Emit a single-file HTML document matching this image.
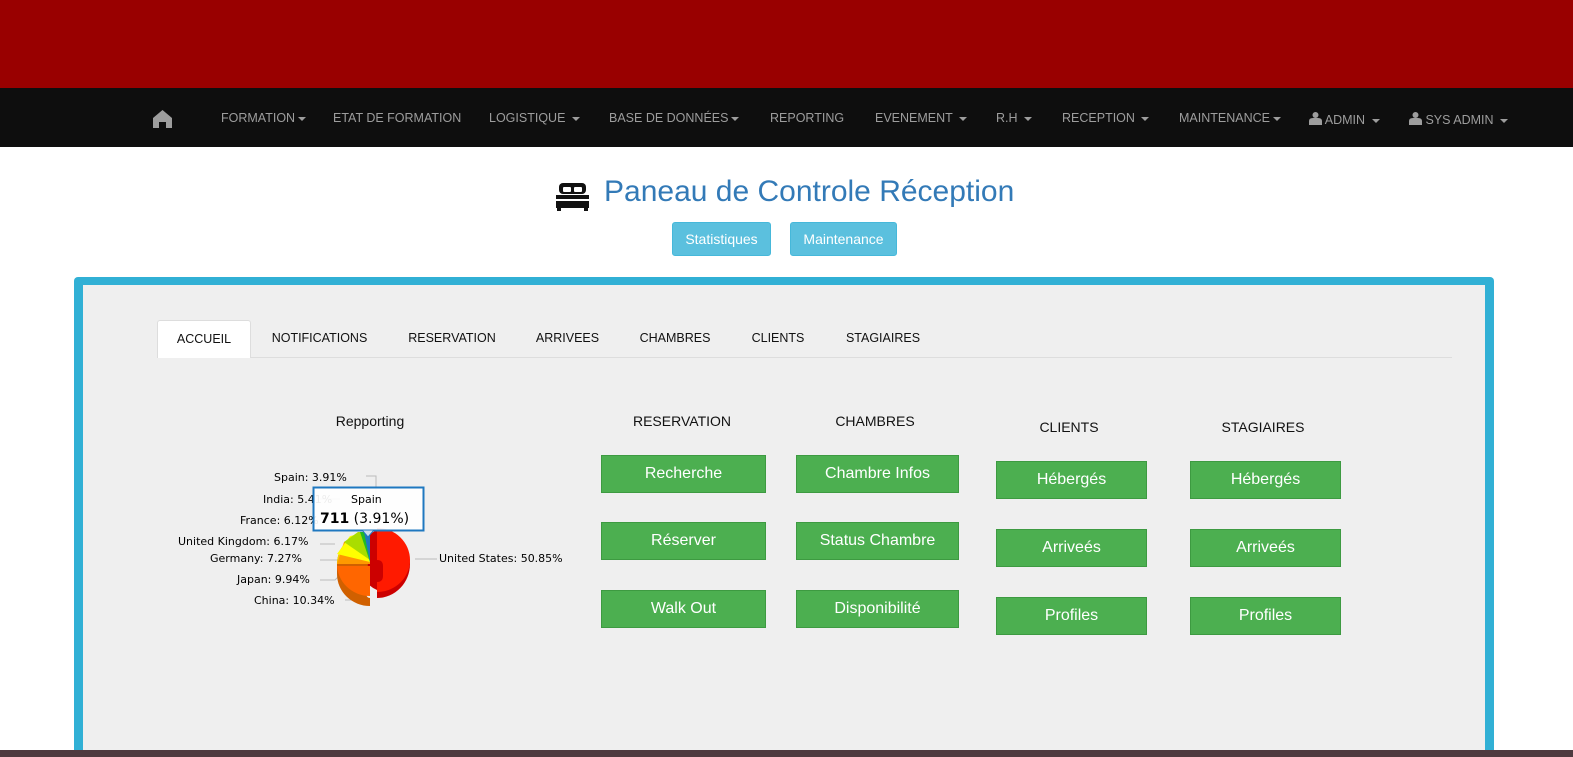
<!DOCTYPE html>
<html><head><meta charset="utf-8"><style>
*{margin:0;padding:0;box-sizing:border-box}
html,body{width:1573px;height:757px;overflow:hidden}
body{background:#fff;font-family:"Liberation Sans",sans-serif;position:relative}
.a{position:absolute}
.top{left:0;top:0;width:1573px;height:88px;background:#990000}
.nav{left:0;top:88px;width:1573px;height:59px;background:#0e0e0e}
.nav span{position:absolute;top:23px;color:#9d9d9d;font-size:12.5px;white-space:nowrap}
.car{display:inline-block;width:0;height:0;border-left:4px solid transparent;border-right:4px solid transparent;border-top:4px solid #9d9d9d;vertical-align:middle;margin-left:3px}
.title{left:604px;top:175px;font-size:30px;color:#337ab7}
.ib{top:222px;height:34px;background:#5bc0de;border:1px solid #46b8da;border-radius:3px;color:#fff;font-size:14px;text-align:center;line-height:32px}
.panel{left:74px;top:277px;width:1420px;height:473px;background:#31b0d5;border-radius:4px 4px 0 0}
.inner{left:83px;top:285px;width:1402px;height:465px;background:#efefef}
.tabs{left:157px;top:357px;width:1295px;height:1px;background:#ddd}
.tab{top:320px;height:38px;line-height:36px;font-size:12.5px;color:#111;text-align:center}
.act{background:#fff;border:1px solid #ddd;border-bottom:none;border-radius:3px 3px 0 0}
.h{font-size:14px;color:#111;text-align:center;width:200px}
.g{background:#4caf50;color:#fff;font-size:16px;text-align:center;border:1px solid #3d9a41}
.tb{left:0;top:750px;width:1573px;height:7px;background:#4e3a3f}
.lab{font-family:"DejaVu Sans",sans-serif;font-size:11px;color:#222}
</style></head><body>
<div class="a top"></div>
<div class="a nav">
<svg class="a" style="left:153px;top:22px" width="19" height="18" viewBox="0 0 19 18"><path d="M9.5 0L0 8v10h6v-6h7v6h6V8z" fill="#9d9d9d"/></svg>
<span style="left:221px">FORMATION<i class="car"></i></span>
<span style="left:333px">ETAT DE FORMATION</span>
<span style="left:489px">LOGISTIQUE <i class="car"></i></span>
<span style="left:609px">BASE DE DONNÉES<i class="car"></i></span>
<span style="left:770px">REPORTING</span>
<span style="left:875px">EVENEMENT <i class="car"></i></span>
<span style="left:996px">R.H <i class="car"></i></span>
<span style="left:1062px">RECEPTION <i class="car"></i></span>
<span style="left:1179px">MAINTENANCE<i class="car"></i></span>
<span style="left:1309px;top:24px"><svg width="13" height="13" viewBox="0 0 13 13" style="vertical-align:-1px"><circle cx="6.5" cy="3" r="3" fill="#9d9d9d"/><path d="M0 13V9q0-3 4-3h5q4 0 4 3v4z" fill="#9d9d9d"/></svg> ADMIN <i class="car"></i></span>
<span style="left:1409px;top:24px"><svg width="13" height="13" viewBox="0 0 13 13" style="vertical-align:-1px"><circle cx="6.5" cy="3" r="3" fill="#9d9d9d"/><path d="M0 13V9q0-3 4-3h5q4 0 4 3v4z" fill="#9d9d9d"/></svg> SYS ADMIN <i class="car"></i></span>
</div>
<svg class="a" style="left:556px;top:183px" width="33" height="28" viewBox="0 0 33 28"><rect x="3" y="0" width="27" height="11" rx="4" fill="#111"/><rect x="7" y="4" width="8" height="5" rx="1" fill="#fff"/><rect x="18" y="4" width="8" height="5" rx="1" fill="#fff"/><rect x="0" y="12" width="33" height="4" fill="#111"/><rect x="0" y="18" width="33" height="7" fill="#111"/><rect x="1" y="25" width="4" height="3" fill="#111"/><rect x="28" y="25" width="4" height="3" fill="#111"/></svg>
<div class="a title">Paneau de Controle Réception</div>
<div class="a ib" style="left:672px;width:99px">Statistiques</div>
<div class="a ib" style="left:790px;width:107px">Maintenance</div>
<div class="a panel"></div>
<div class="a inner"></div>
<div class="a tabs"></div>
<div class="a tab act" style="left:157px;width:94px">ACCUEIL</div>
<div class="a tab" style="left:262px;width:115px">NOTIFICATIONS</div>
<div class="a tab" style="left:398px;width:108px">RESERVATION</div>
<div class="a tab" style="left:527px;width:81px">ARRIVEES</div>
<div class="a tab" style="left:630px;width:90px">CHAMBRES</div>
<div class="a tab" style="left:742px;width:72px">CLIENTS</div>
<div class="a tab" style="left:836px;width:94px">STAGIAIRES</div>
<div class="a h" style="left:270px;top:413px">Repporting</div>
<div class="a h" style="left:582px;top:413px">RESERVATION</div>
<div class="a h" style="left:775px;top:413px">CHAMBRES</div>
<div class="a h" style="left:969px;top:419px">CLIENTS</div>
<div class="a h" style="left:1163px;top:419px">STAGIAIRES</div>
<div class="a g" style="left:601px;top:455px;width:165px;height:38px;line-height:36px">Recherche</div>
<div class="a g" style="left:601px;top:522px;width:165px;height:38px;line-height:36px">Réserver</div>
<div class="a g" style="left:601px;top:590px;width:165px;height:38px;line-height:36px">Walk Out</div>
<div class="a g" style="left:796px;top:455px;width:163px;height:38px;line-height:36px">Chambre Infos</div>
<div class="a g" style="left:796px;top:522px;width:163px;height:38px;line-height:36px">Status Chambre</div>
<div class="a g" style="left:796px;top:590px;width:163px;height:38px;line-height:36px">Disponibilité</div>
<div class="a g" style="left:996px;top:461px;width:151px;height:38px;line-height:36px">Hébergés</div>
<div class="a g" style="left:996px;top:529px;width:151px;height:38px;line-height:36px">Arriveés</div>
<div class="a g" style="left:996px;top:597px;width:151px;height:38px;line-height:36px">Profiles</div>
<div class="a g" style="left:1190px;top:461px;width:151px;height:38px;line-height:36px">Hébergés</div>
<div class="a g" style="left:1190px;top:529px;width:151px;height:38px;line-height:36px">Arriveés</div>
<div class="a g" style="left:1190px;top:597px;width:151px;height:38px;line-height:36px">Profiles</div>
<svg class="a" style="left:170px;top:460px" width="410" height="150">
<g stroke="#bbb" fill="none"><path d="M196 16h10v40"/><path d="M150 39h20"/><path d="M150 84h15"/><path d="M150 100h20"/><path d="M150 120h15l10-10"/><path d="M175 140h15v-20"/><path d="M245 99h22"/></g>
<path d="M207 70a33 34 0 0 1 0 68v-8a33 33 0 0 1 0-60z" fill="#cc0000"/>
<path d="M207 68a33 32 0 0 1 0 64v-10q6 0 6-6v-10q0-6-6-6z" fill="#ff1a00"/>
<path d="M200 72a33 32 0 0 0-33 32v10a33 32 0 0 0 33 32v-8q-4 0-4-6z" fill="#d06000"/>
<path d="M200 72a33 32 0 0 0-33 32h33z" fill="#f5d000"/>
<path d="M200 72l-26 10-7 22h33z" fill="#ff9900"/>
<path d="M200 72l-20 4-13 18 33 8z" fill="#ffff00"/>
<path d="M200 72l-12 0-14 10 26 18z" fill="#aadd00"/>
<path d="M200 72l-10 0 10 30z" fill="#22bb22"/>
<path d="M200 72l-6 0 6 30z" fill="#1f78c0"/>
<path d="M167 104a33 32 0 0 0 33 32v-30h-33z" fill="#ff6600"/>
<text class="lab" x="104" y="21">Spain: 3.91%</text>
<text class="lab" x="93" y="43">India: 5.41%</text>
<text class="lab" x="70" y="64">France: 6.12%</text>
<text class="lab" x="8" y="85">United Kingdom: 6.17%</text>
<text class="lab" x="40" y="102">Germany: 7.27%</text>
<text class="lab" x="67" y="123">Japan: 9.94%</text>
<text class="lab" x="84" y="144">China: 10.34%</text>
<text class="lab" x="269" y="102">United States: 50.85%</text>
<rect x="143.5" y="27.5" width="110" height="43" fill="#fff" fill-opacity=".92" stroke="#1f78c0" stroke-width="2"/>
<path d="M192 70l6 7 6-7z" fill="#cde" stroke="#1f78c0"/>
<text class="lab" x="181" y="43">Spain</text>
<text x="150" y="63" style="font-family:'DejaVu Sans',sans-serif;font-size:14px"><tspan font-weight="bold">711</tspan> (3.91%)</text>
</svg>
<div class="a tb"></div>
</body></html>
